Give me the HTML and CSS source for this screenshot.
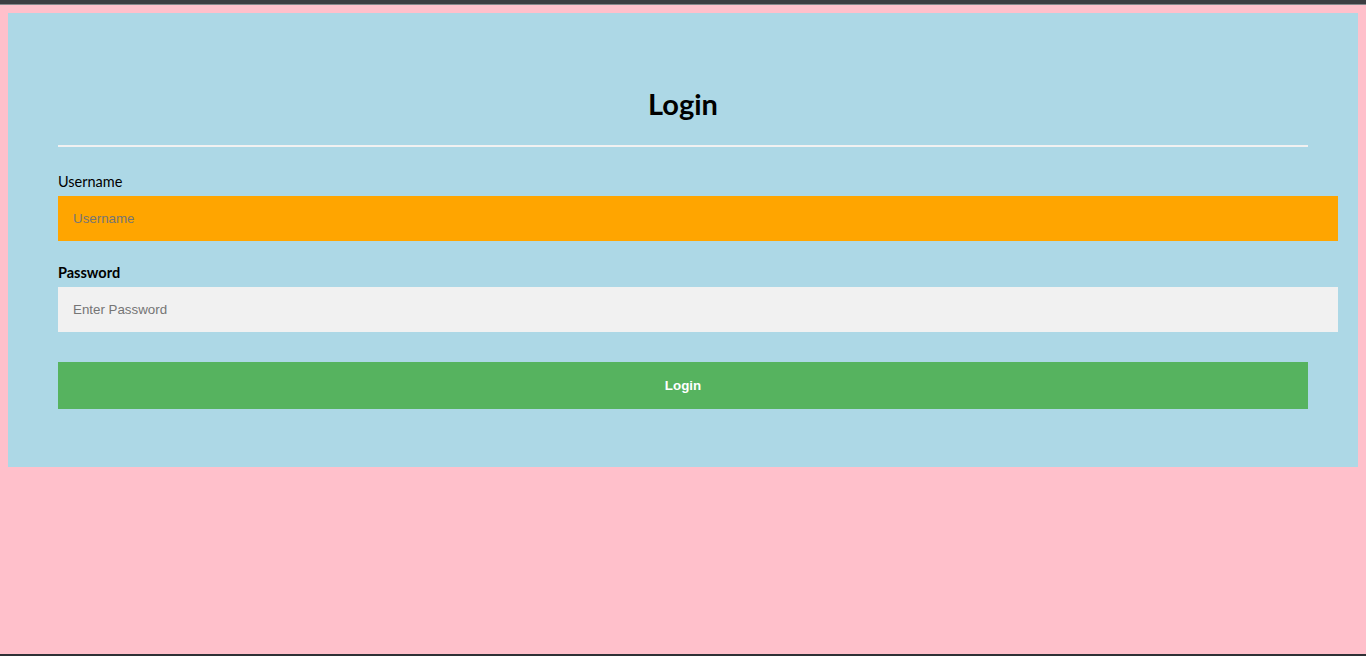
FILE: index.html
```html
<!DOCTYPE html>
<html lang="en">
<head>
<meta charset="utf-8">
<title>Login</title>
<link rel="stylesheet" href="styles.css">
</head>
<body>
<div class="topbar"></div>
<main class="page">
  <form class="container">
    <h1 class="title">Login</h1>
    <hr class="rule">
    <label class="label" for="uname">Username</label>
    <input class="field field-active" type="text" id="uname" placeholder="Username" autofocus>
    <label class="label" for="psw"><b>Password</b></label>
    <input class="field" type="password" id="psw" placeholder="Enter Password">
    <button class="btn" type="button">Login</button>
  </form>
</main>
<div class="bottombar"></div>
</body>
</html>
```
FILE: styles.css
```css
html, body {
  margin: 0;
  padding: 0;
  height: 100%;
}
body {
  background: #ffc0cb;
  display: flex;
  flex-direction: column;
  font-family: Lato, "Open Sans", sans-serif;
}
.topbar {
  height: 4px;
  background: #3c3d41;
  border-bottom: 1px solid #85868a;
  flex: none;
}
.page {
  flex: 1;
  padding: 8px;
}
.bottombar {
  height: 2px;
  background: #2f3136;
  flex: none;
}
.container {
  background: #add8e6;
  padding: 16px 50px 50px 50px;
  display: flex;
  flex-direction: column;
  align-items: flex-start;
}
.title {
  margin: 58px 0 24px 0;
  width: 100%;
  text-align: center;
  font-size: 29px;
  line-height: 34px;
  font-weight: 700;
  color: #000;
}
.rule {
  width: 100%;
  margin: 0 0 25px 0;
  border: none;
  height: 2px;
  background: #f1f1f1;
}
.label {
  display: block;
  font-size: 14.5px;
  line-height: 19px;
  color: #000;
}
.field {
  width: 100%;
  box-sizing: content-box;
  padding: 15px;
  margin: 5px 0 22px 0;
  border: none;
  outline: none;
  background: #f1f1f1;
  font-family: "Liberation Sans", Arial, sans-serif;
  font-size: 13.3333px;
  line-height: 15px;
  height: 15px;
  color: #000;
}
.field::placeholder {
  color: #757575;
}
.field-active {
  background: #ffa500;
}
.btn {
  width: 100%;
  margin: 8px 0;
  padding: 16px 20px;
  border: none;
  background: #56b35f;
  color: #fff;
  font-family: "Liberation Sans", Arial, sans-serif;
  font-size: 13.3333px;
  line-height: 15px;
  font-weight: 700;
  cursor: pointer;
}
```
